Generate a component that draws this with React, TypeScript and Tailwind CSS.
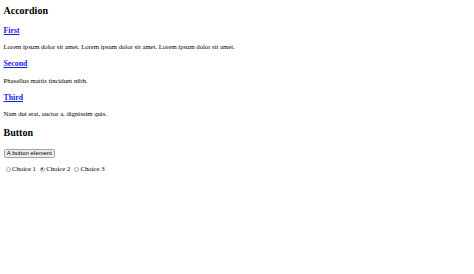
import React from 'react';

const sections = [
  { title: 'First', body: 'Lorem ipsum dolor sit amet. Lorem ipsum dolor sit amet. Lorem ipsum dolor sit amet.', mt: 'mt-[8.5px]' },
  { title: 'Second', body: 'Phasellus mattis tincidunt nibh.', mt: 'mt-[8.3px]' },
  { title: 'Third', body: 'Nam dui erat, auctor a, dignissim quis.', mt: 'mt-[8.3px]' },
];

const choices = ['Choice 1', 'Choice 2', 'Choice 3'];

export default function App() {
  return (
    <div className="min-h-screen bg-white pl-[3.5px] pt-[5.3px] font-['Liberation_Serif','Times_New_Roman',serif] text-black">
      <h2 className="text-[10px] leading-[12px] font-bold">Accordion</h2>

      {sections.map((s) => (
        <div key={s.title}>
          <h3 className={`${s.mt} text-[7.8px] leading-[9px] font-bold`}>
            <a href="#" className="text-[#1a1ae0] underline">{s.title}</a>
          </h3>
          <p className="mt-[8.3px] text-[6.7px] leading-[8px]">{s.body}</p>
        </div>
      ))}

      <h2 className="mt-[8.9px] text-[10px] leading-[12px] font-bold">Button</h2>

      <div className="mt-[9.7px] flex">
        <button className="h-[9px] px-[2.3px] flex items-center border border-[#a3a3a3] rounded-[1.5px] bg-[#ededed] font-['Liberation_Sans',Arial,sans-serif] text-[6px] leading-none text-black">
          A button element
        </button>
      </div>

      <div className="mt-[7.2px] flex items-center text-[6.7px] leading-[8px]">
        {choices.map((c, i) => (
          <label key={c} className={`flex items-center ${i === 0 ? 'ml-[2px]' : 'ml-[3.8px]'}`}>
            <span className="w-[5px] h-[5px] rounded-full border-[0.8px] border-[#a8a8a8] bg-white flex items-center justify-center">
              {i === 1 && <span className="w-[2.4px] h-[2.4px] rounded-full bg-[#444]" />}
            </span>
            <span className="ml-[1.5px]">{c}</span>
          </label>
        ))}
      </div>
    </div>
  );
}
